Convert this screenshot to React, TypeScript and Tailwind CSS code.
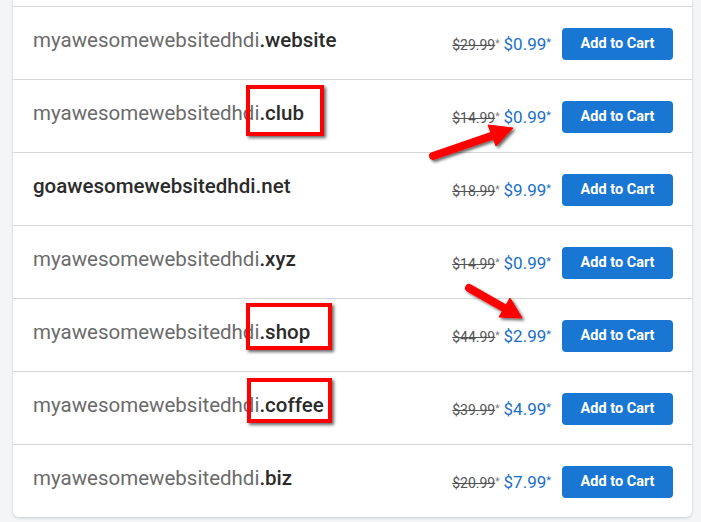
import React from "react";

type Row = { name: string; tld: string; old: string; price: string; dark?: boolean };

const rows: Row[] = [
  { name: "myawesomewebsitedhdi", tld: ".website", old: "$29.99", price: "$0.99" },
  { name: "myawesomewebsitedhdi", tld: ".club", old: "$14.99", price: "$0.99" },
  { name: "goawesomewebsitedhdi", tld: ".net", old: "$18.99", price: "$9.99", dark: true },
  { name: "myawesomewebsitedhdi", tld: ".xyz", old: "$14.99", price: "$0.99" },
  { name: "myawesomewebsitedhdi", tld: ".shop", old: "$44.99", price: "$2.99" },
  { name: "myawesomewebsitedhdi", tld: ".coffee", old: "$39.99", price: "$4.99" },
  { name: "myawesomewebsitedhdi", tld: ".biz", old: "$20.99", price: "$7.99" },
];

function DomainRow({ r }: { r: Row }) {
  return (
    <div className="flex h-[73px] items-center justify-between border-t border-[#d6d6d6] pl-[20px] pr-[19px]">
      <div className="mb-[5px] text-[20.5px]">
        {r.dark ? (
          <span className="font-medium text-[#2b2b2b]">
            {r.name}
            {r.tld}
          </span>
        ) : (
          <>
            <span className="text-[#6b6b6b]">{r.name}</span>
            <span className="font-medium text-[#2b2b2b]">{r.tld}</span>
          </>
        )}
      </div>
      <div className="flex items-center">
        <div className="mt-[3px] flex items-baseline">
          <span className="text-[14px] text-[#555] line-through">{r.old}</span>
          <span className="relative top-[-3px] mr-[4px] text-[10px] text-[#777]">*</span>
          <span className="text-[17px] text-[#1b6fc9]">{r.price}</span>
          <span className="relative top-[-4px] text-[11px] text-[#1b6fc9]">*</span>
        </div>
        <button className="ml-[11px] mt-[1px] flex h-[32px] w-[111px] items-center justify-center rounded-[4px] bg-[#1976d2] text-[14.5px] font-bold text-white">
          Add to Cart
        </button>
      </div>
    </div>
  );
}

export default function App() {
  return (
    <div
      className="relative h-[522px] w-[701px] overflow-hidden bg-[#f4f5f6]"
      style={{ fontFamily: "Roboto, 'Liberation Sans', sans-serif" }}
    >
      <div className="ml-[13px] w-[679px] rounded-b-[6px] bg-white shadow-[0_1px_3px_rgba(0,0,0,0.18)]">
        <div className="h-[6px]" />
        {rows.map((r, i) => (
          <DomainRow key={i} r={r} />
        ))}
      </div>

      {/* annotation boxes */}
      <div className="absolute left-[246px] top-[85px] h-[51px] w-[78px] border-[4px] border-[#ff0000] shadow-[2px_2px_3px_rgba(0,0,0,0.6)]" />
      <div className="absolute left-[246px] top-[303px] h-[47px] w-[86px] border-[4px] border-[#ff0000] shadow-[2px_2px_3px_rgba(0,0,0,0.6)]" />
      <div className="absolute left-[247px] top-[378px] h-[45px] w-[85px] border-[4px] border-[#ff0000] shadow-[2px_2px_3px_rgba(0,0,0,0.6)]" />

      {/* arrows */}
      <svg className="pointer-events-none absolute left-0 top-0" width="701" height="522">
        <defs>
          <filter id="sh" x="-20%" y="-20%" width="140%" height="140%">
            <feDropShadow dx="2" dy="2" stdDeviation="1.5" floodColor="#000" floodOpacity="0.6" />
          </filter>
        </defs>
        <g filter="url(#sh)" fill="#ff0000" stroke="#ff0000">
          <line x1="433" y1="156" x2="494" y2="135" strokeWidth="8" strokeLinecap="round" />
          <polygon points="513,128 496,146 488,125" strokeWidth="1" strokeLinejoin="round" />
          <line x1="469" y1="288" x2="506" y2="309" strokeWidth="8" strokeLinecap="round" />
          <polygon points="522,318 499,317 510,298" strokeWidth="1" strokeLinejoin="round" />
        </g>
      </svg>
    </div>
  );
}
